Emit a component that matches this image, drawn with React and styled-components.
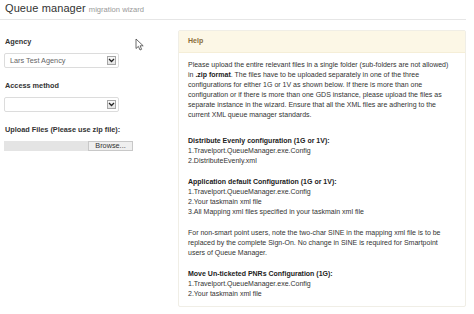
import React from 'react';
import styled, { createGlobalStyle } from 'styled-components';

const GlobalStyle = createGlobalStyle`
  body {
    margin: 0;
    background: #fff;
    font-family: "Liberation Sans", Arial, sans-serif;
    color: #333;
  }
`;

const Chevron = () => (
  <svg width="7" height="5" viewBox="0 0 7 5">
    <path d="M1 1 L3.5 3.5 L6 1" fill="none" stroke="#222" strokeWidth="1.3" />
  </svg>
);

const Cursor = () => (
  <svg width="9" height="13" viewBox="0 0 9 13">
    <path
      d="M1 1 L1 10.5 L3.4 8.4 L5 12 L6.6 11.3 L5.1 7.8 L8.2 7.8 Z"
      fill="#fff"
      stroke="#444"
      strokeWidth="0.8"
      strokeLinejoin="round"
    />
  </svg>
);

const App = () => {
  return (
    <Page>
      <GlobalStyle />
      <Header>
        <Title>Queue manager</Title>
        <Subtitle>migration wizard</Subtitle>
      </Header>
      <Main>
        <Form>
          <Label>Agency</Label>
          <Select>
            <span>Lars Test Agency</span>
            <ArrowBox>
              <Chevron />
            </ArrowBox>
          </Select>
          <Label>Access method</Label>
          <Select>
            <span />
            <ArrowBox>
              <Chevron />
            </ArrowBox>
          </Select>
          <Label>Upload Files (Please use zip file):</Label>
          <FileInput>
            <FileName />
            <BrowseButton>Browse...</BrowseButton>
          </FileInput>
        </Form>
        <Panel>
          <PanelHeading>Help</PanelHeading>
          <PanelBody>
            <Para $gap={15.5}>
              Please upload the entire relevant files in a single folder (sub-folders are not allowed)
              <br />
              in <b>.zip format</b>. The files have to be uploaded separately in one of the three
              configurations for either 1G or 1V as shown below. If there is more than one
              configuration or if there is more than one GDS instance, please upload the files as
              separate instance in the wizard. Ensure that all the XML files are adhering to the
              current XML queue manager standards.
            </Para>
            <Para>
              <b>Distribute Evenly configuration (1G or 1V):</b>
              <br />
              1.Travelport.QueueManager.exe.Config
              <br />
              2.DistributeEvenly.xml
            </Para>
            <Para>
              <b>Application default Configuration (1G or 1V):</b>
              <br />
              1.Travelport.QueueManager.exe.Config
              <br />
              2.Your taskmain xml file
              <br />
              3.All Mapping xml files specified in your taskmain xml file
            </Para>
            <Para>
              For non-smart point users, note the two-char SINE in the mapping xml file is to be
              replaced by the complete Sign-On. No change in SINE is required for Smartpoint
              users of Queue Manager.
            </Para>
            <Para>
              <b>Move Un-ticketed PNRs Configuration (1G):</b>
              <br />
              1.Travelport.QueueManager.exe.Config
              <br />
              2.Your taskmain xml file
            </Para>
          </PanelBody>
        </Panel>
      </Main>
      <CursorSpot>
        <Cursor />
      </CursorSpot>
    </Page>
  );
};

const Page = styled.div`
  position: relative;
  width: 474px;
  height: 314px;
  overflow: hidden;
`;

const Header = styled.div`
  display: flex;
  align-items: baseline;
  gap: 3px;
  height: 19px;
  margin-right: 8px;
  padding-left: 5px;
  border-bottom: 1px solid #e6e6e6;
`;

const Title = styled.h1`
  margin: 0;
  font-size: 11px;
  line-height: 17px;
  font-weight: normal;
  color: #333;
  letter-spacing: 0.1px;
`;

const Subtitle = styled.small`
  font-size: 7.6px;
  color: #999;
`;

const Main = styled.div`
  display: grid;
  grid-template-columns: 174px 288px;
  padding-left: 4px;
`;

const Form = styled.div`
  display: flex;
  flex-direction: column;
  align-items: flex-start;
  padding-top: 17px;
`;

const Label = styled.div`
  padding-left: 1px;
  font-size: 7.3px;
  line-height: 9px;
  font-weight: bold;
  color: #333;
  margin-bottom: 7px;
`;

const Select = styled.div`
  box-sizing: border-box;
  display: flex;
  align-items: center;
  justify-content: space-between;
  width: 115px;
  height: 15px;
  margin-bottom: 13px;
  padding: 0 2px 0 5px;
  border: 1px solid #dcdcdc;
  border-radius: 2px;
  font-size: 7.3px;
  color: #666;
`;

const ArrowBox = styled.div`
  box-sizing: border-box;
  display: flex;
  align-items: center;
  justify-content: center;
  width: 9px;
  height: 9px;
  border: 1px solid #a6a6a6;
  background: linear-gradient(#fafafa, #e2e2e2);
`;

const FileInput = styled.div`
  display: flex;
  width: 129px;
  height: 10px;
  margin-top: 0;
`;

const FileName = styled.div`
  flex: 1;
  background: #e4e4e4;
`;

const BrowseButton = styled.div`
  box-sizing: border-box;
  width: 45px;
  border: 1px solid #c8c8c8;
  background: #efefef;
  font-size: 7.3px;
  line-height: 8px;
  color: #333;
  text-align: center;
`;

const Panel = styled.div`
  margin-top: 10px;
  height: 277px;
  box-sizing: border-box;
  border: 1px solid #f0eee6;
  border-radius: 2px;
`;

const PanelHeading = styled.div`
  height: 21px;
  padding-left: 9px;
  background: #fcf7e6;
  border-bottom: 1px solid #f5eed7;
  color: #8a6d3b;
  font-size: 7px;
  font-weight: bold;
  line-height: 20px;
`;

const PanelBody = styled.div`
  padding: 7px 9px 0 9px;
  font-size: 7px;
  line-height: 10px;
  color: #333;

  b {
    color: #222;
  }
`;

const Para = styled.p`
  margin: 0 0 ${(p) => p.$gap || 11}px;
`;

const CursorSpot = styled.div`
  position: absolute;
  left: 135px;
  top: 37px;
`;

export default App;
